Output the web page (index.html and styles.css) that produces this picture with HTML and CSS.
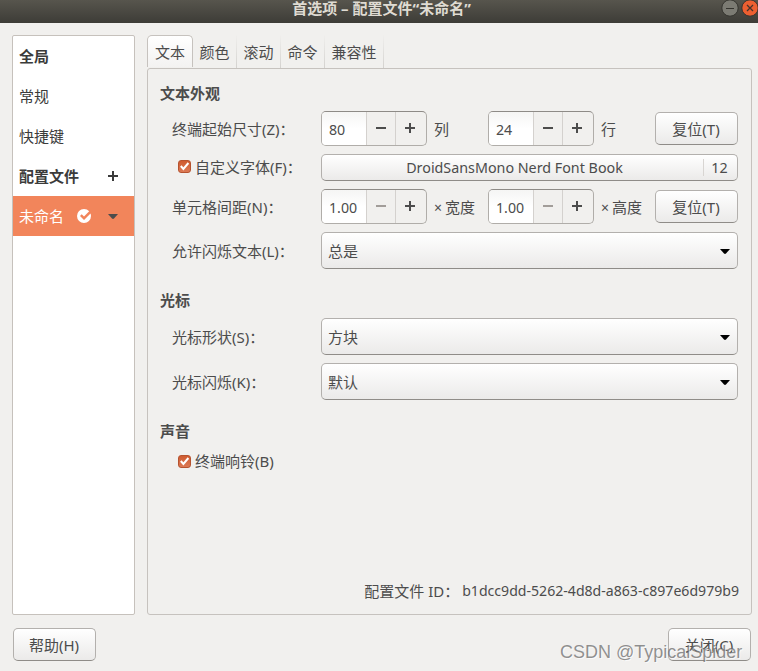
FILE: index.html
```html
<!DOCTYPE html>
<html lang="zh-CN">
<head>
<meta charset="utf-8">
<title>首选项</title>
<link rel="stylesheet" href="styles.css">
</head>
<body>
<svg width="0" height="0" class="defs">
  <symbol id="plus" viewBox="0 0 12 12"><path d="M1 6h10M6 1v10" stroke="currentColor" stroke-width="2" fill="none"/></symbol>
  <symbol id="minus" viewBox="0 0 12 12"><path d="M1 6h10" stroke="currentColor" stroke-width="2" fill="none"/></symbol>
  <symbol id="arrow" viewBox="0 0 10 5"><path d="M0 0h10L6 4.5Q5 5.3 4 4.5Z" fill="currentColor"/></symbol>
  <symbol id="tick" viewBox="0 0 11 11"><path d="M1.8 5 4.4 8 9.4 2" fill="none" stroke="#fff" stroke-width="2"/></symbol>
</svg>
<header class="titlebar">
  <h1>首选项 – 配置文件“未命名”</h1>
  <div class="controls">
    <svg class="control" viewBox="0 0 18 18"><circle cx="9" cy="9" r="8.2" fill="#7c7b73" stroke="#35342f"/><path d="M5 9.5h8" stroke="#35342f"/></svg>
    <svg class="control" viewBox="0 0 18 18"><circle cx="9" cy="9" r="8.2" fill="#ed5f31" stroke="#35342f"/><path d="m6 6 6 6m0-6-6 6" stroke="#46332b" stroke-width="1.3"/></svg>
  </div>
</header>
<main class="content">
  <nav class="sidebar">
    <div class="item bold">全局</div>
    <div class="item">常规</div>
    <div class="item">快捷键</div>
    <div class="item bold"><span class="grow">配置文件</span><svg class="icon"><use href="#plus"/></svg></div>
    <div class="item selected"><span>未命名</span>
      <svg class="default" viewBox="0 0 14 14"><path d="M7 0a7 7 0 1 0 7 7c0-.9-.2-1.8-.5-2.6L7 11 3 7l1.7-1.7L7 7.6l5.2-5.3A7 7 0 0 0 7 0Z" fill="#fff"/></svg>
      <span class="grow"></span><svg class="arrow"><use href="#arrow"/></svg></div>
  </nav>
  <section class="notebook">
    <div class="tabs">
      <div class="tab active">文本</div><div class="tab">颜色</div><div class="tab">滚动</div><div class="tab">命令</div><div class="tab last">兼容性</div>
    </div>
    <div class="panel">
      <h2>文本外观</h2>
      <div class="row">
        <div class="label">终端起始尺寸(Z)：</div>
        <div class="spin"><span class="value">80</span><span class="step"><svg class="icon"><use href="#minus"/></svg></span><span class="step"><svg class="icon"><use href="#plus"/></svg></span></div>
        <div class="unit">列</div>
        <div class="spin"><span class="value">24</span><span class="step"><svg class="icon"><use href="#minus"/></svg></span><span class="step"><svg class="icon"><use href="#plus"/></svg></span></div>
        <div class="unit">行</div>
        <div class="button">复位(T)</div>
      </div>
      <div class="row font-row">
        <div class="label check"><svg class="box"><use href="#tick"/></svg>自定义字体(F)：</div>
        <div class="button font"><span class="name">DroidSansMono Nerd Font Book</span><span class="size">12</span></div>
      </div>
      <div class="row">
        <div class="label">单元格间距(N)：</div>
        <div class="spin"><span class="value">1.00</span><span class="step off"><svg class="icon"><use href="#minus"/></svg></span><span class="step"><svg class="icon"><use href="#plus"/></svg></span></div>
        <div class="unit"><span class="times">×</span>宽度</div>
        <div class="spin"><span class="value">1.00</span><span class="step off"><svg class="icon"><use href="#minus"/></svg></span><span class="step"><svg class="icon"><use href="#plus"/></svg></span></div>
        <div class="unit"><span class="times">×</span>高度</div>
        <div class="button">复位(T)</div>
      </div>
      <div class="row select-row">
        <div class="label">允许闪烁文本(L)：</div>
        <div class="button select"><span>总是</span><svg class="arrow"><use href="#arrow"/></svg></div>
      </div>
      <h2 class="cursor">光标</h2>
      <div class="row select-row">
        <div class="label">光标形状(S)：</div>
        <div class="button select"><span>方块</span><svg class="arrow"><use href="#arrow"/></svg></div>
      </div>
      <div class="row select-row">
        <div class="label">光标闪烁(K)：</div>
        <div class="button select"><span>默认</span><svg class="arrow"><use href="#arrow"/></svg></div>
      </div>
      <h2 class="sound">声音</h2>
      <div class="label check bell"><svg class="box"><use href="#tick"/></svg>终端响铃(B)</div>
      <div class="profile"><span>配置文件 ID：</span><span class="uuid">b1dcc9dd-5262-4d8d-a863-c897e6d979b9</span></div>
    </div>
  </section>
</main>
<footer class="actions">
  <div class="button">帮助(H)</div>
  <div class="button">关闭(C)</div>
</footer>
<div class="watermark">CSDN @TypicalSpider</div>
</body>
</html>
```
FILE: styles.css
```css
* { box-sizing: border-box; }
body {
  position: relative;
  margin: 0;
  width: 758px;
  height: 671px;
  overflow: hidden;
  background: #f1f0ee;
  color: #4c4c4c;
  font: 15px/20px "Noto Sans", "Noto Sans CJK SC", sans-serif;
  white-space: nowrap;
}
svg { display: block; flex: none; }
.defs { position: absolute; }
.titlebar {
  position: relative;
  height: 23px;
  background: linear-gradient(#57554d, #3d3c37);
  display: flex;
  justify-content: center;
}
h1 {
  margin: 0;
  padding-left: 5px;
  height: 20px;
  line-height: 17px;
  font-size: 15px;
  color: #dfdbd2;
}
.controls { position: absolute; right: -1px; top: -1px; display: flex; gap: 2px; }
.control { width: 18px; height: 18px; }
.content { display: flex; gap: 12px; padding: 12px 6px 0 12px; height: 592px; }
.sidebar { width: 123px; background: #fff; border: 1px solid #c6c1bc; border-radius: 2px; color: #3b3b3b; }
.item { height: 40px; padding: 0 15px 1px 6px; display: flex; align-items: center; }
.item .icon { margin-top: 1px; }
.bold { font-weight: bold; }
.grow { flex: 1; }
.selected { background: #f2855b; color: #fff; }
.selected .arrow { color: #4c4c4c; margin: 1px 1px 0 0; }
.default { width: 14px; height: 14px; margin-left: 13px; }
.icon { width: 12px; height: 12px; }
.arrow { width: 10px; height: 5px; color: #000; }
.notebook { flex: 1; display: flex; flex-direction: column; }
.tabs { display: flex; height: 33px; }
.tab {
  width: 44px;
  padding-top: 7px;
  text-align: center;
  border-right: 1px solid;
  border-image: linear-gradient(#f1f0ee, #d3d1ce) 1;
}
.tab.active {
  width: 46px;
  height: 32px;
  border: 1px solid #c6c2be;
  border-bottom: 0;
  border-image: none;
  border-radius: 5px 5px 0 0;
  padding-top: 6px;
  background: linear-gradient(#fff, #f3f2f1);
}
.tab.last { width: 59px; }
.panel {
  flex: 1;
  border: 1px solid #c6c2be;
  border-radius: 3px;
  padding: 14px 13px 0 12px;
  display: flex;
  flex-direction: column;
}
h2 { margin: 0 0 8px; font-size: 15px; line-height: 20px; }
.row { display: flex; align-items: center; height: 35px; margin-bottom: 8px; }
.label { width: 161px; flex: none; padding: 1px 0 0 12px; }
.check { display: flex; align-items: center; padding: 0 0 2px 18px; }
.box {
  width: 13px;
  height: 13px;
  margin-right: 4px;
  border: 1px solid #b6532f;
  border-radius: 3px;
  background: linear-gradient(#cf5b30, #dc7a55);
}
.spin {
  width: 106px;
  height: 35px;
  flex: none;
  display: flex;
  border: 1px solid #b0ada9;
  border-top-color: #8e8b87;
  border-radius: 5px;
  overflow: hidden;
}
.value { width: 44px; padding: 8px 0 0 7px; background: linear-gradient(#f5f5f4, #fff 50%); font-size: 14.2px; }
.step { width: 29px; display: flex; align-items: center; justify-content: center; border-left: 1px solid #d4d1ce; }
.step:last-child { width: 31px; padding-right: 2px; }
.step .icon { margin-top: -1px; }
.off { color: #a29d99; }
.unit { width: 61px; padding: 1px 0 0 7px; flex: none; }
.times { display: inline-block; width: 11px; font-size: 14px; }
.button {
  width: 83px;
  height: 33px;
  flex: none;
  border: 1px solid #b3b0ad;
  border-bottom-color: #8f8c88;
  border-radius: 5px;
  background: linear-gradient(#fff, #ebeae9);
  text-align: center;
  padding: 6px 1px 0 0;
}
.font-row { height: 27px; }
.font { width: 417px; height: 27px; padding: 0; display: flex; align-items: center; font-size: 14.3px; }
.name { flex: 1; padding-left: 4px; }
.size { width: 34px; padding-right: 2px; line-height: 17px; border-left: 1px solid #d8d5d2; }
.select-row { height: 37px; }
.select { width: 417px; height: 37px; display: flex; align-items: center; justify-content: space-between; padding: 0 7px 0 6px; }
.select .arrow { margin-top: 1px; }
.cursor { margin: 13px 0 8px; }
.sound { margin: 13px 0 10px; }
.bell { padding-bottom: 0; }
.profile { margin-top: auto; margin-bottom: 13px; display: flex; justify-content: flex-end; margin-right: -1px; }
.uuid { font-size: 14.1px; margin-left: 3px; }
.actions { display: flex; justify-content: space-between; padding: 13px 7px 0 13px; }
.watermark {
  position: absolute;
  left: 560px;
  top: 641px;
  font: 18px/22px "Liberation Sans", sans-serif;
  color: rgba(110, 110, 110, .75);
  text-shadow: 1px 1px 0 rgba(255, 255, 255, .7);
}
```
